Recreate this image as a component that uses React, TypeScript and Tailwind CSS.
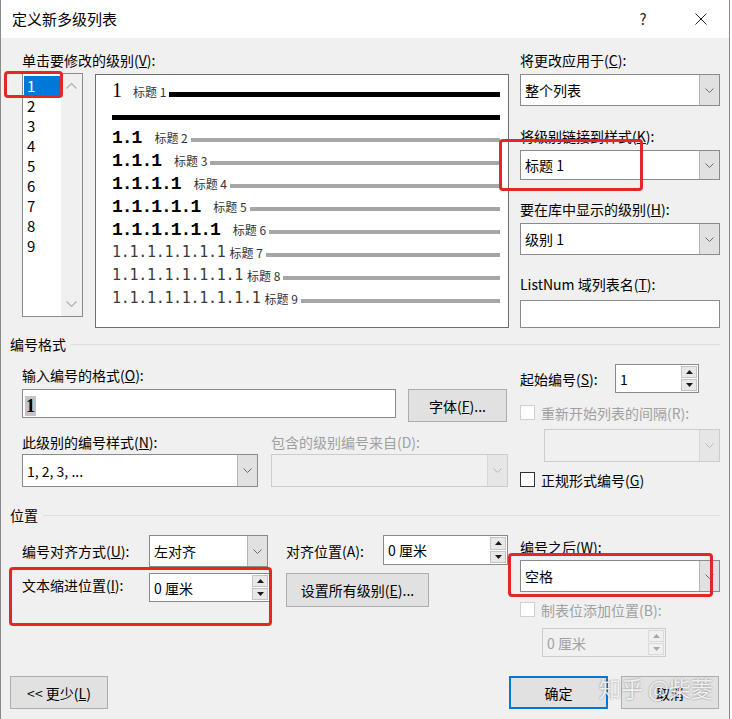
import React from "react";

const F = "font-['Noto_Sans_CJK_SC','Noto_Sans',sans-serif]";

function Chevron({ disabled }: { disabled?: boolean }) {
  return (
    <svg width="9" height="5" viewBox="0 0 9 5">
      <polyline points="0.5,0.5 4.5,4.5 8.5,0.5" fill="none" stroke={disabled ? "#b8b8b8" : "#6a6a6a"} strokeWidth="1" />
    </svg>
  );
}

function ChevronUp({ color }: { color: string }) {
  return (
    <svg width="11" height="6" viewBox="0 0 11 6">
      <polyline points="0.5,5.5 5.5,0.5 10.5,5.5" fill="none" stroke={color} strokeWidth="1.2" />
    </svg>
  );
}

function Tri({ up, disabled }: { up?: boolean; disabled?: boolean }) {
  return (
    <svg width="7" height="4" viewBox="0 0 7 4">
      <polygon points={up ? "0,4 7,4 3.5,0" : "0,0 7,0 3.5,4"} fill={disabled ? "#a8a8a8" : "#1a1a1a"} />
    </svg>
  );
}

function Select({ cls, value, disabled }: { cls: string; value?: string; disabled?: boolean }) {
  return (
    <div className={`flex ${cls} border ${disabled ? "border-[#cccccc] bg-[#f0f0f0]" : "border-[#8a8a8a] bg-white"}`}>
      <div className="flex-1 flex items-center pl-[4px] text-[14px] leading-[18px]">{value}</div>
      <div className={`w-[20px] flex items-center justify-center border-l ${disabled ? "bg-[#e6e6e6] border-[#d6d6d6]" : "bg-[#e1e1e1] border-[#b4b4b4]"}`}>
        <Chevron disabled={disabled} />
      </div>
    </div>
  );
}

function Spinner({ cls, value, disabled }: { cls: string; value: string; disabled?: boolean }) {
  return (
    <div className={`flex ${cls} border ${disabled ? "border-[#cccccc] bg-[#f0f0f0]" : "border-[#8a8a8a] bg-white"}`}>
      <div className={`flex-1 flex items-center pl-[4px] text-[14px] leading-[18px] ${disabled ? "text-[#a0a0a0]" : ""}`}>{value}</div>
      <div className="w-[18px] flex flex-col p-[1px] gap-[1px]">
        <div className={`flex-1 flex items-center justify-center border ${disabled ? "bg-[#f0f0f0] border-[#dadada]" : "bg-[#e8e8e8] border-[#c4c4c4]"}`}>
          <Tri up disabled={disabled} />
        </div>
        <div className={`flex-1 flex items-center justify-center border ${disabled ? "bg-[#f0f0f0] border-[#dadada]" : "bg-[#e8e8e8] border-[#c4c4c4]"}`}>
          <Tri disabled={disabled} />
        </div>
      </div>
    </div>
  );
}

function Button({ cls, children, primary }: { cls: string; children: React.ReactNode; primary?: boolean }) {
  return (
    <div
      className={`flex items-center justify-center text-[14px] leading-[18px] bg-[#e1e1e1] ${cls} ${
        primary ? "border-2 border-[#0078d7]" : "border border-[#adadad]"
      }`}
    >
      {children}
    </div>
  );
}

function Check({ disabled }: { disabled?: boolean }) {
  return <div className={`w-[15px] h-[15px] bg-white border ${disabled ? "border-[#d0d0d0]" : "border-[#333333]"}`} />;
}

function Label({ children, cls = "" }: { children: React.ReactNode; cls?: string }) {
  return <div className={`h-[18px] text-[14px] leading-[18px] whitespace-nowrap ${cls}`}>{children}</div>;
}

function Section({ title, cls }: { title: string; cls: string }) {
  return (
    <div className={`flex items-center h-[18px] ${cls}`}>
      <span className="text-[14px] leading-[18px]">{title}</span>
      <div className="flex-1 ml-[5px] border-t border-[#dcdcdc]" />
    </div>
  );
}

const boldRows = ["1.1", "1.1.1", "1.1.1.1", "1.1.1.1.1", "1.1.1.1.1.1"];
const lightRows = ["1.1.1.1.1.1.1", "1.1.1.1.1.1.1.1", "1.1.1.1.1.1.1.1.1"];

function Preview() {
  return (
    <div className="ml-[12px] mt-[1px] w-[414px] h-[254px] border border-[#6e6e6e] bg-white pl-[16px] pr-[8px] flex flex-col">
      <div className="flex items-end h-[22px]">
        <span className="font-['Liberation_Serif',serif] text-[20px] leading-none mb-[-3px]">1</span>
        <span className="ml-[11px] text-[12px] leading-none text-[#333333] mb-[-1px]">标题 1</span>
        <div className="flex-1 ml-[3px] h-[5px] bg-black" />
      </div>
      <div className="mt-[18px] h-[5px] bg-black" />
      {boldRows.map((r, i) => (
        <div key={r} className="flex items-end h-[23px]">
          <span className="font-['Liberation_Mono',monospace] font-bold text-[18px] tracking-[-1px] leading-none mb-[-4px]">{r}</span>
          <span className="ml-[13px] text-[12px] leading-none text-[#333333] mb-[-1px]">标题 {i + 2}</span>
          <div className="flex-1 ml-[3px] h-[4px] bg-[#a6a6a6] mb-[1px]" />
        </div>
      ))}
      {lightRows.map((r, i) => (
        <div key={r} className="flex items-end h-[23px]">
          <span className="font-['DejaVu_Sans_Mono',monospace] text-[15px] tracking-[-0.3px] leading-none text-[#3a3a3a] mb-[-2px]">{r}</span>
          <span className="ml-[4px] text-[12px] leading-none text-[#333333] mb-[-1px]">标题 {i + 7}</span>
          <div className="flex-1 ml-[3px] h-[4px] bg-[#a6a6a6] mb-[1px]" />
        </div>
      ))}
    </div>
  );
}

function LevelList() {
  const items = ["1", "2", "3", "4", "5", "6", "7", "8", "9"];
  return (
    <div className="w-[61px] h-[244px] border border-[#8a8a8a] bg-white flex">
      <div className="flex-1 pt-[2px]">
        {items.map((it, i) => (
          <div
            key={it}
            className={`h-[20px] leading-[20px] text-[15px] ml-[1px] w-[36px] pl-[3px] ${i === 0 ? "bg-[#0078d7] text-white" : ""}`}
          >
            {it}
          </div>
        ))}
      </div>
      <div className="w-[21px] bg-[#f0f0f0] flex flex-col items-center justify-between py-[9px]">
        <ChevronUp color="#b0b0b0" />
        <div className="rotate-180">
          <ChevronUp color="#b0b0b0" />
        </div>
      </div>
    </div>
  );
}

export default function App() {
  return (
    <div className={`w-[732px] h-[719px] bg-white ${F} text-black`}>
      <div className="relative w-[730px] h-[719px] border-x border-[#8a8a8a] bg-[#f0f0f0] flex flex-col">
        {/* title bar */}
        <div className="h-[38px] bg-white flex items-center pl-[11px] pr-[22px] shrink-0">
          <span className="text-[15px] leading-[20px]">定义新多级列表</span>
          <span className="ml-auto w-[14px] text-center text-[15px] leading-[20px] text-[#222]">?</span>
          <svg className="ml-[45px]" width="12" height="12" viewBox="0 0 12 12">
            <line x1="0.5" y1="0.5" x2="11.5" y2="11.5" stroke="#222" strokeWidth="1" />
            <line x1="11.5" y1="0.5" x2="0.5" y2="11.5" stroke="#222" strokeWidth="1" />
          </svg>
        </div>

        {/* body */}
        <div className="flex-1 flex flex-col pl-[9px] pr-[9px]">
          {/* top */}
          <div className="flex">
            <div className="pl-[12px] w-[499px] flex flex-col">
              <Label cls="mt-[13px]">
                单击要修改的级别(<u>V</u>):
              </Label>
              <div className="flex items-start mt-[4px]">
                <LevelList />
                <Preview />
              </div>
            </div>
            <div className="ml-[11px] w-[200px] flex flex-col">
              <Label cls="mt-[13px]">
                将更改应用于(<u>C</u>):
              </Label>
              <Select cls="mt-[5px] h-[32px] w-[200px]" value="整个列表" />
              <Label cls="mt-[21px]">
                将级别链接到样式(<u>K</u>):
              </Label>
              <Select cls="mt-[5px] h-[30px] w-[200px]" value="标题 1" />
              <Label cls="mt-[20px]">
                要在库中显示的级别(<u>H</u>):
              </Label>
              <Select cls="mt-[5px] h-[32px] w-[200px]" value="级别 1" />
              <Label cls="mt-[20px]">
                ListNum 域列表名(<u>T</u>):
              </Label>
              <div className="mt-[7px] h-[28px] w-[200px] border border-[#8a8a8a] bg-white" />
            </div>
          </div>

          {/* 编号格式 */}
          <Section title="编号格式" cls="mt-[7px]" />
          <div className="flex">
            <div className="pl-[12px] w-[499px] flex flex-col">
              <Label cls="mt-[13px]">
                输入编号的格式(<u>O</u>):
              </Label>
              <div className="flex items-start mt-[5px]">
                <div className="w-[374px] h-[29px] border border-[#8a8a8a] bg-white pl-[2px] pt-[3px]">
                  <span className="inline-block bg-[#c4c4c4] px-[1px] font-['Liberation_Serif',serif] font-bold text-[18px] leading-[20px]">1</span>
                </div>
                <Button cls="ml-[12px] w-[99px] h-[33px]">
                  字体(<u>F</u>)...
                </Button>
              </div>
              <div className="flex mt-[11px]">
                <Label cls="w-[249px]">
                  此级别的编号样式(<u>N</u>):
                </Label>
                <Label cls="text-[#a0a0a0]">包含的级别编号来自(D):</Label>
              </div>
              <div className="flex mt-[3px]">
                <Select cls="w-[236px] h-[33px]" value="1, 2, 3, ..." />
                <Select cls="ml-[13px] w-[237px] h-[33px]" disabled />
              </div>
            </div>
            <div className="ml-[11px] w-[200px] flex flex-col">
              <div className="flex items-center mt-[11px]">
                <Label cls="w-[95px]">
                  起始编号(<u>S</u>):
                </Label>
                <Spinner cls="w-[84px] h-[29px]" value="1" />
              </div>
              <div className="flex items-center mt-[12px] h-[15px]">
                <Check disabled />
                <Label cls="ml-[6px] text-[#a0a0a0]">重新开始列表的间隔(R):</Label>
              </div>
              <Select cls="ml-[24px] mt-[9px] w-[176px] h-[33px]" disabled />
              <div className="flex items-center mt-[10px] h-[15px]">
                <Check />
                <Label cls="ml-[6px]">
                  正规形式编号(<u>G</u>)
                </Label>
              </div>
            </div>
          </div>

          {/* 位置 */}
          <Section title="位置" cls="mt-[19px]" />
          <div className="flex">
            <div className="pl-[12px] w-[499px] flex flex-col">
              <div className="flex items-center mt-[11px] h-[32px]">
                <Label cls="w-[127px]">
                  编号对齐方式(<u>U</u>):
                </Label>
                <Select cls="w-[119px] h-[32px]" value="左对齐" />
                <Label cls="ml-[18px] w-[97px]">对齐位置(A):</Label>
                <div className="self-start">
                  <Spinner cls="w-[125px] h-[30px]" value="0 厘米" />
                </div>
              </div>
              <div className="flex items-start mt-[6px]">
                <Label cls="w-[127px] mt-[3px]">
                  文本缩进位置(<u>I</u>):
                </Label>
                <Spinner cls="w-[121px] h-[29px]" value="0 厘米" />
                <Button cls="ml-[16px] w-[143px] h-[34px]">
                  设置所有级别(<u>E</u>)...
                </Button>
              </div>
            </div>
            <div className="ml-[11px] w-[200px] flex flex-col">
              <Label cls="mt-[14px]">编号之后(W):</Label>
              <Select cls="mt-[4px] h-[32px] w-[200px]" value="空格" />
              <div className="flex items-center mt-[10px] h-[15px]">
                <Check disabled />
                <Label cls="ml-[6px] text-[#a0a0a0]">制表位添加位置(B):</Label>
              </div>
              <Spinner cls="ml-[22px] mt-[11px] w-[124px] h-[29px]" value="0 厘米" disabled />
            </div>
          </div>

          {/* bottom buttons */}
          <div className="mt-auto mb-[10px] flex">
            <Button cls="w-[98px] h-[33px]">
              &lt;&lt; 更少(<u>L</u>)
            </Button>
            <Button cls="ml-[401px] w-[99px] h-[33px]" primary>
              确定
            </Button>
            <Button cls="ml-[13px] w-[98px] h-[33px]">取消</Button>
          </div>
        </div>

        {/* red annotation boxes */}
        <div className="absolute left-[3px] top-[71px] w-[59px] h-[27px] border-[3px] border-[#e3262a] rounded-[4px]" />
        <div className="absolute left-[498px] top-[139px] w-[144px] h-[52px] border-[3px] border-[#e3262a] rounded-[4px]" />
        <div className="absolute left-[8px] top-[567px] w-[263px] h-[59px] border-[3px] border-[#e3262a] rounded-[4px]" />
        <div className="absolute left-[507px] top-[553px] w-[205px] h-[44px] border-[3px] border-[#e3262a] rounded-[4px]" />

        {/* watermark */}
        <div className="absolute left-[598px] top-[673px] text-[22px] leading-[28px] text-white/85 whitespace-nowrap [text-shadow:0_0_2px_rgba(0,0,0,0.45)]">
          知乎 @柴菱
        </div>
      </div>
    </div>
  );
}
